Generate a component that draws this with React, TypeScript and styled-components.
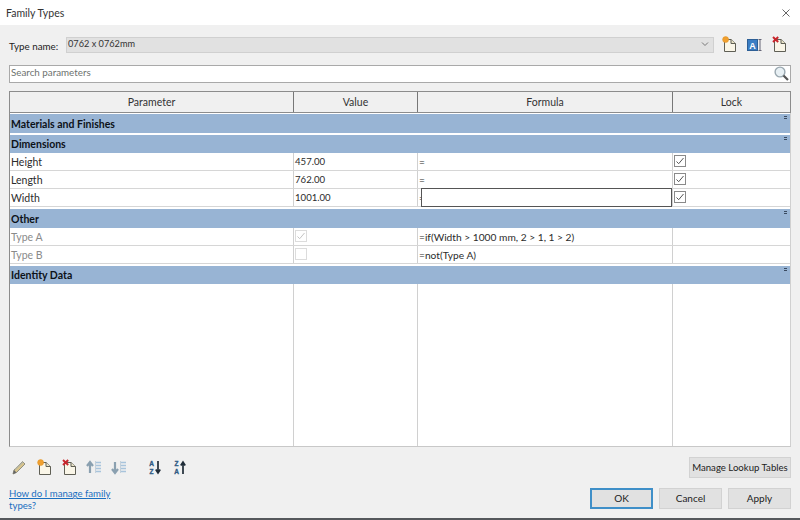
import React from "react";
import styled, { createGlobalStyle } from "styled-components";

const Global = createGlobalStyle`
  html, body { margin: 0; padding: 0; background: #f0f0f0; }
  body { width: 800px; height: 520px; overflow: hidden; font-family: Lato, "Noto Sans", sans-serif; font-size: 10.5px; color: #2b2b2b; }
`;

const Dialog = styled.div`
  width: 800px; height: 520px; display: flex; flex-direction: column;
  background: #f0f0f0; border-bottom: 2px solid #55585c; box-sizing: border-box;
`;
const TitleBar = styled.div`
  height: 25px; flex: none; background: #fff; display: flex; align-items: center;
  justify-content: space-between; padding: 0 10px 0 6px; box-sizing: border-box; font-size: 10.5px; color: #333;
`;
const Body = styled.div`
  flex: 1; min-height: 0; display: flex; flex-direction: column; padding: 11px 9px 0 9px;
`;
const TypeRow = styled.div`
  display: flex; align-items: center; height: 17px; flex: none;
`;
const TypeLabel = styled.span`
  width: 57px; flex: none; font-size: 9.8px; padding-top: 2px; color: #222;
`;
const Combo = styled.div`
  flex: none; width: 648px; height: 16px; box-sizing: border-box; background: #e1e1e1; border: 1px solid #d0d0d0;
  display: flex; align-items: center; justify-content: space-between; padding: 0 4px 2px 1px; font-size: 9.2px; color: #333;
`;
const TypeTools = styled.div`
  display: flex; align-items: center; gap: 10px; margin-left: 8px;
`;
const Search = styled.div`
  height: 18px; flex: none; margin-top: 12px; box-sizing: border-box; background: #fff; border: 1px solid #a9a9a9;
  display: flex; align-items: center; justify-content: space-between; padding: 0 0 0 1px; font-size: 9.8px; color: #6d726f;
  & > span { margin-top: -4px; }
`;
const Table = styled.div`
  height: 356px; flex: none; margin-top: 8px; background: #fff; display: flex; flex-direction: column;
  border-left: 1px solid #8c8c8c; border-right: 1px solid #d0d0d0; border-bottom: 1px solid #c8c8c8; box-sizing: border-box;
`;
const Columns = "283px 124px 255px 1fr";
const HeaderRow = styled.div`
  display: grid; grid-template-columns: ${Columns}; height: 20px; flex: none; background: #f0f0f0;
  border-top: 1px solid #8c8c8c; border-bottom: 1px solid #8c8c8c; border-right: 1px solid #8c8c8c; box-sizing: content-box; margin-bottom: 1px; margin-right: -1px;
`;
const HeaderCell = styled.div`
  display: flex; align-items: center; justify-content: center; font-size: 10.5px; color: #333;
  & + & { border-left: 1px solid #777; }
`;
const Group = styled.div<{ $gap?: boolean }>`
  height: ${p => (p.$gap ? 19 : 18)}px; flex: none; background: #98b4d4; display: flex; align-items: center; justify-content: space-between;
  padding: 0 3px 0 1px; font-weight: 700; font-size: 10.5px; color: #0c1118;
  & > i { align-self: flex-start; margin-top: 2px; width: 3px; height: 4px; background: linear-gradient(#3a4a60 0 1px, #98b4d4 1px 2px, #3a4a60 2px 3px, #98b4d4 3px); }
`;
const Row = styled.div`
  display: grid; grid-template-columns: ${Columns}; height: 18px; flex: none; box-sizing: border-box;
  border-bottom: 1px solid #d6d6d6; background: #fff;
`;
const Cell = styled.div<{ $muted?: boolean; $size?: number }>`
  display: flex; align-items: center; padding-left: 1px; color: ${p => (p.$muted ? "#8a8a8a" : "#2b2b2b")}; white-space: nowrap; position: relative;
  font-size: ${p => p.$size ?? 10.5}px;
  & + & { border-left: 1px solid #d0d0d0; }
`;
const Spacer = styled.div`
  height: 2px; flex: none; background: #fff;
`;
const Filler = styled.div`
  flex: 1; display: grid; grid-template-columns: ${Columns};
  & > div + div { border-left: 1px solid #d0d0d0; }
`;
const EditBox = styled.div`
  position: absolute; left: 3px; right: 0; top: -1px; bottom: -1px; z-index: 1; background: #fff; border: 1px solid #555; box-sizing: border-box;
`;
const Check = styled.div<{ $muted?: boolean }>`
  width: 12px; height: 12px; box-sizing: border-box; background: #fff; margin: -2px 0 0 0;
  border: 1px solid ${p => (p.$muted ? "#dcdcdc" : "#8a8a8a")}; display: flex; align-items: center; justify-content: center;
`;
const Footer = styled.div`
  flex: 1; display: flex; justify-content: space-between; min-height: 0;
`;
const FooterLeft = styled.div`
  display: flex; flex-direction: column; padding-top: 12px;
`;
const Tools = styled.div`
  display: flex; align-items: center; height: 17px; padding-left: 2px;
`;
const ToolGap = styled.span<{ $w: number }>`
  width: ${p => p.$w}px; flex: none;
`;
const HelpLink = styled.a`
  margin-top: 12px; width: 120px; color: #1a6fc0; font-size: 9.6px; line-height: 12px; text-decoration: none;
  & span { text-decoration: underline; }
`;
const FooterRight = styled.div`
  display: flex; flex-direction: column; align-items: flex-end; padding-top: 10px; gap: 10px;
`;
const Button = styled.div<{ $primary?: boolean; $wide?: boolean }>`
  width: ${p => (p.$wide ? 102 : 63)}px; height: 21px; box-sizing: border-box; background: #e1e1e1; padding-bottom: 1px;
  border: ${p => (p.$primary ? "2px solid #3f8fc8" : "1px solid #d2d2d2")}; display: flex; align-items: center; justify-content: center;
  font-size: ${p => (p.$wide ? 9.6 : 10)}px; color: #222; white-space: nowrap;
`;
const Buttons = styled.div`
  display: flex; gap: 6px;
`;

const Sheet = ({ badge }: { badge?: "new" | "del" }) => (
  <svg width="15" height="17" viewBox="0 0 15 17">
    <path d="M2.5 3.5H9L13.5 7.5V15.5H2.5Z" fill="#faf6e8" stroke="#5f5f55" />
    <path d="M9 3.5V7.5H13.5" fill="#e9e3c8" stroke="#5f5f55" />
    {badge === "new" && <circle cx="3.6" cy="3.6" r="3" fill="#f0a030" stroke="#e0901f" strokeWidth=".5" />}
    {badge === "del" && <path d="M1 1L6.2 6M6.2 1L1 6" stroke="#c8262c" strokeWidth="2" />}
  </svg>
);
const Rename = () => (
  <svg width="15" height="14" viewBox="0 0 15 14">
    <rect x=".5" y="1.5" width="10" height="11" fill="#3b7ec4" stroke="#2d5f96" />
    <text x="5.5" y="10.5" fontSize="9" fontWeight="700" fill="#fff" textAnchor="middle" fontFamily="Liberation Sans">A</text>
    <path d="M11.5 1.5H14.5M11.5 12.5H14.5M13 1.5V12.5" stroke="#667" fill="none" />
  </svg>
);
const Magnifier = () => (
  <svg width="17" height="16" viewBox="0 0 17 16">
    <circle cx="7" cy="6" r="4.9" fill="#e8f0f4" stroke="#9aa8b0" strokeWidth="1.4" />
    <path d="M10.5 9.5L15 14" stroke="#555" strokeWidth="2.2" />
  </svg>
);
const Pencil = () => (
  <svg width="16" height="17" viewBox="0 0 16 17">
    <path d="M2 15L3 11L11.5 2.5L14 5L5.5 13.5Z" fill="#d8c48c" stroke="#8f8f80" />
    <path d="M2 15L3 11L5.5 13.5Z" fill="#666" />
    <path d="M4 10.5L12 3" stroke="#b5b5a5" strokeWidth="1.2" />
  </svg>
);
const MoveRows = ({ down }: { down?: boolean }) => (
  <svg width="16" height="15" viewBox="0 0 16 15">
    <path d={down ? "M4 2V12M1 9L4 13L7 9" : "M4 13V3M1 6L4 2L7 6"} stroke="#8aa0b0" strokeWidth="2.2" fill="none" />
    <path d="M9 2.5H15M9 5.5H15M9 8.5H15M9 11.5H15" stroke="#a8c4dc" strokeWidth="1.3" />
    <path d="M9.5 1V13" stroke="#c4d0da" />
  </svg>
);
const Sort = ({ up }: { up?: boolean }) => (
  <svg width="15" height="15" viewBox="0 0 15 15">
    <text x="3.5" y="6.3" fontSize="6.5" fontWeight="700" fill="#2f5b84" stroke="#2f5b84" strokeWidth=".35" textAnchor="middle" fontFamily="Liberation Sans">{up ? "Z" : "A"}</text>
    <text x="3.5" y="13.8" fontSize="6.5" fontWeight="700" fill="#2f5b84" stroke="#2f5b84" strokeWidth=".35" textAnchor="middle" fontFamily="Liberation Sans">{up ? "A" : "Z"}</text>
    <path d={up ? "M10 14V3M7.8 5.5L10 2L12.2 5.5" : "M10 1V12M7.8 9.5L10 13L12.2 9.5"} stroke="#1f2c38" strokeWidth="1.7" fill="none" />
  </svg>
);
const CheckBox = ({ checked, muted }: { checked?: boolean; muted?: boolean }) => (
  <Check $muted={muted}>
    {checked && (
      <svg width="10" height="10" viewBox="0 0 10 10">
        <path d="M1.5 5.5L3.7 7.7L8.5 2" stroke={muted ? "#c4c4c4" : "#555"} fill="none" />
      </svg>
    )}
  </Check>
);

const VALUE = 9.6;
const FORMULA = 10.2;

export default function App() {
  return (
    <Dialog>
      <Global />
      <TitleBar>
        <span>Family Types</span>
        <svg width="8" height="8" viewBox="0 0 8 8">
          <path d="M.5 .5L7.5 7.5M7.5 .5L.5 7.5" stroke="#555" strokeWidth=".9" />
        </svg>
      </TitleBar>
      <Body>
        <TypeRow>
          <TypeLabel>Type name:</TypeLabel>
          <Combo>
            <span>0762 x 0762mm</span>
            <svg width="8" height="6" viewBox="0 0 8 6">
              <path d="M1 1.5L4 4.5L7 1.5" stroke="#777" fill="none" />
            </svg>
          </Combo>
          <TypeTools>
            <Sheet badge="new" />
            <Rename />
            <Sheet badge="del" />
          </TypeTools>
        </TypeRow>
        <Search>
          <span>Search parameters</span>
          <Magnifier />
        </Search>
        <Table>
          <HeaderRow>
            <HeaderCell>Parameter</HeaderCell>
            <HeaderCell>Value</HeaderCell>
            <HeaderCell>Formula</HeaderCell>
            <HeaderCell>Lock</HeaderCell>
          </HeaderRow>
          <Group $gap>Materials and Finishes<i /></Group>
          <Spacer />
          <Group>Dimensions<i /></Group>
          <Row><Cell>Height</Cell><Cell $size={VALUE}>457.00</Cell><Cell $size={FORMULA}>=</Cell><Cell><CheckBox checked /></Cell></Row>
          <Row><Cell>Length</Cell><Cell $size={VALUE}>762.00</Cell><Cell $size={FORMULA}>=</Cell><Cell><CheckBox checked /></Cell></Row>
          <Row><Cell>Width</Cell><Cell $size={VALUE}>1001.00</Cell><Cell $size={FORMULA}>=<EditBox /></Cell><Cell><CheckBox checked /></Cell></Row>
          <Spacer />
          <Group $gap>Other<i /></Group>
          <Row><Cell $muted>Type A</Cell><Cell><CheckBox checked muted /></Cell><Cell $size={FORMULA}>=if(Width &gt; 1000 mm, 2 &gt; 1, 1 &gt; 2)</Cell><Cell /></Row>
          <Row><Cell $muted>Type B</Cell><Cell><CheckBox muted /></Cell><Cell $size={FORMULA}>=not(Type A)</Cell><Cell /></Row>
          <Spacer />
          <Group>Identity Data<i /></Group>
          <Filler><div /><div /><div /><div /></Filler>
        </Table>
        <Footer>
          <FooterLeft>
            <Tools>
              <Pencil />
              <ToolGap $w={10} />
              <Sheet badge="new" />
              <ToolGap $w={10} />
              <Sheet badge="del" />
              <ToolGap $w={9} />
              <MoveRows />
              <ToolGap $w={9} />
              <MoveRows down />
              <ToolGap $w={21} />
              <Sort />
              <ToolGap $w={10} />
              <Sort up />
            </Tools>
            <HelpLink><span>How do I manage family</span><br />types?</HelpLink>
          </FooterLeft>
          <FooterRight>
            <Button $wide>Manage Lookup Tables</Button>
            <Buttons>
              <Button $primary>OK</Button>
              <Button>Cancel</Button>
              <Button>Apply</Button>
            </Buttons>
          </FooterRight>
        </Footer>
      </Body>
    </Dialog>
  );
}
